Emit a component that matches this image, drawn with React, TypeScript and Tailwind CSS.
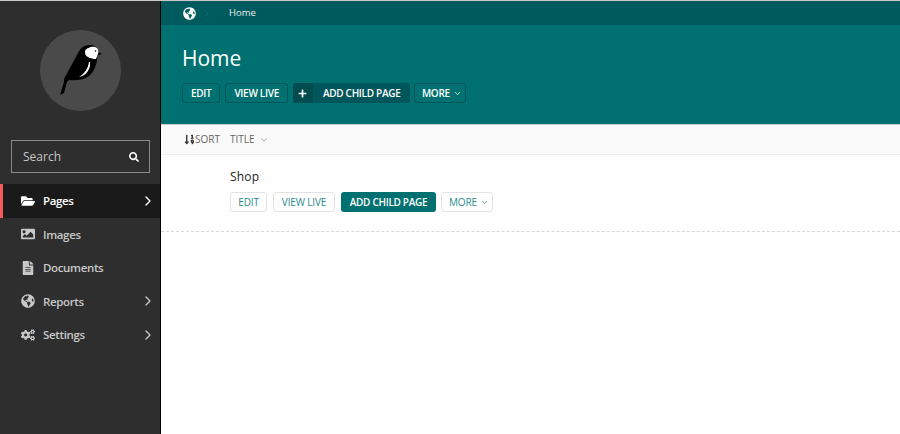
import React from "react"
import { FaCogs, FaFileAlt, FaFolderOpen, FaGlobeAmericas, FaImage, FaPlus, FaSearch, FaSortNumericDown } from "react-icons/fa"
import { LuChevronDown, LuChevronRight } from "react-icons/lu"

const menuItems = [
  { label: "Pages", icon: <FaFolderOpen />, arrow: true, active: true },
  { label: "Images", icon: <FaImage />, arrow: false, active: false },
  { label: "Documents", icon: <FaFileAlt />, arrow: false, active: false },
  { label: "Reports", icon: <FaGlobeAmericas />, arrow: true, active: false },
  { label: "Settings", icon: <FaCogs />, arrow: true, active: false },
]

function Bird() {
  return (
    <svg viewBox="0 2 60 65" className="h-[65px] w-[60px]">
      <path d="M14 43 L28 17 C31 11 35 9 40 9 C44 9 47 11 48 14 L48.500 16 L52 18 L47.500 19.500 C47 29 44 36 39 40 C34 44 26 45 19 44 L17 46 L14 57 L10 59 L14 46 Z" fill="#000" />
      <path d="M35 15 C36 12 42 10 45 11 C48 12 49 15 48 18 L46 23 C41 23 34 21 35 15 Z" fill="#fff" />
      <circle cx="45.500" cy="15" r="0.800" fill="#000" />
      <path d="M40 26 C41 33 36 40 29 41 C34 38 38 33 39 26 Z" fill="#fff" />
    </svg>
  )
}

function Sidebar() {
  return (
    <aside className="flex w-[161px] shrink-0 flex-col border-r border-black bg-[#2e2e2e]">
      <div className="flex justify-center pt-[29px]">
        <div className="flex h-[81px] w-[81px] items-center justify-center rounded-full bg-[#4a4a4a]">
          <Bird />
        </div>
      </div>
      <div className="mt-[29px] mr-[10px] ml-[11px] flex h-[33px] items-center justify-between border border-[#8a8a8a] pr-[10px] pl-[11px] text-[12px] text-[#c4c4c4]">
        <span>Search</span>
        <FaSearch className="text-[10px] text-white" />
      </div>
      <nav className="mt-[11px] flex flex-col">
        {menuItems.map((item) => (
          <div
            key={item.label}
            className={
              item.active
                ? "flex h-[33.500px] items-center border-l-[3px] border-[#f25c5c] bg-[#1a1a1a] pr-[4px] pl-[18px] text-[11.500px] font-semibold tracking-[-0.35px] text-white"
                : "flex h-[33.500px] items-center border-l-[3px] border-transparent pr-[4px] pl-[18px] text-[11.500px] font-semibold tracking-[-0.35px] text-[#c8c8c8]"
            }
          >
            <span className="flex w-[22px] text-[14px]">{item.icon}</span>
            <span className="flex-1">{item.label}</span>
            {item.arrow && <LuChevronRight className="text-[16px]" />}
          </div>
        ))}
      </nav>
    </aside>
  )
}

function HeaderButton({ children, className = "px-[8px]" }: { children: React.ReactNode; className?: string }) {
  return (
    <span className={"flex h-[20px] items-center rounded-[3px] border border-[#00565a] text-[10px] font-semibold tracking-[-0.3px] text-white " + className}>
      {children}
    </span>
  )
}

function RowButton({ children, className = "justify-center" }: { children: React.ReactNode; className?: string }) {
  return (
    <span className={"flex h-[20px] items-center rounded-[3px] border border-[#e3e3e3] bg-white text-[10px] tracking-[-0.15px] text-[#2a8a8b] " + className}>
      {children}
    </span>
  )
}

export default function App() {
  return (
    <div className="flex h-[434px] w-[900px] overflow-hidden border-t border-[#c8c8c8] bg-white font-['Open_Sans',sans-serif]">
      <Sidebar />
      <main className="flex min-w-0 flex-1 flex-col">
        <div className="flex h-[24px] items-center bg-[#005b5e] pl-[22px] text-[9.500px] text-[#e6f0f0]">
          <FaGlobeAmericas className="text-[13px] text-white" />
          <LuChevronRight className="ml-[5px] text-[11px] text-[#0a6f70]" />
          <span className="ml-[17px]">Home</span>
        </div>
        <header className="h-[100px] border-b border-[#c0d0d0] bg-[#007170] pt-[19px] pl-[21px]">
          <h1 className="text-[21px] leading-[28px] text-white">Home</h1>
          <div className="mt-[11px] flex gap-[5px]">
            <HeaderButton>EDIT</HeaderButton>
            <HeaderButton>VIEW LIVE</HeaderButton>
            <span className="flex h-[20px] w-[117px] items-center rounded-[3px] bg-[#00565a] text-[10px] font-semibold tracking-[-0.3px] text-white">
              <span className="flex h-full w-[20px] items-center justify-center rounded-l-[3px] bg-[#004c4f]">
                <FaPlus className="text-[9px]" />
              </span>
              <span className="ml-[10px]">ADD CHILD PAGE</span>
            </span>
            <HeaderButton className="-ml-[1px] w-[52px] pl-[7px]">
              MORE
              <LuChevronDown className="ml-[3px] text-[9px]" />
            </HeaderButton>
          </div>
        </header>
        <div className="flex h-[30px] items-center border-b border-[#eeeeee] bg-[#fafafa] pl-[23px] text-[10px] text-[#666]">
          <FaSortNumericDown className="text-[11px] text-[#333]" />
          <span>SORT</span>
          <span className="ml-[10px]">TITLE</span>
          <LuChevronDown className="ml-[4px] text-[10px] text-[#999]" />
        </div>
        <div className="h-[77px] border-b border-dashed border-[#d8d8d8] pt-[13px] pl-[69px]">
          <p className="text-[12px] leading-[18px] font-medium tracking-[0.2px] text-[#222]">Shop</p>
          <div className="mt-[6px] flex gap-[6px]">
            <RowButton className="w-[37px] justify-center">EDIT</RowButton>
            <RowButton className="w-[62px] justify-center">VIEW LIVE</RowButton>
            <span className="flex h-[20px] w-[95px] items-center justify-center rounded-[3px] bg-[#007170] text-[10px] font-semibold tracking-[-0.3px] text-white">
              ADD CHILD PAGE
            </span>
            <RowButton className="-ml-[1px] w-[52px] pl-[7px]">
              MORE
              <LuChevronDown className="ml-[3px] text-[9px]" />
            </RowButton>
          </div>
        </div>
      </main>
    </div>
  )
}
